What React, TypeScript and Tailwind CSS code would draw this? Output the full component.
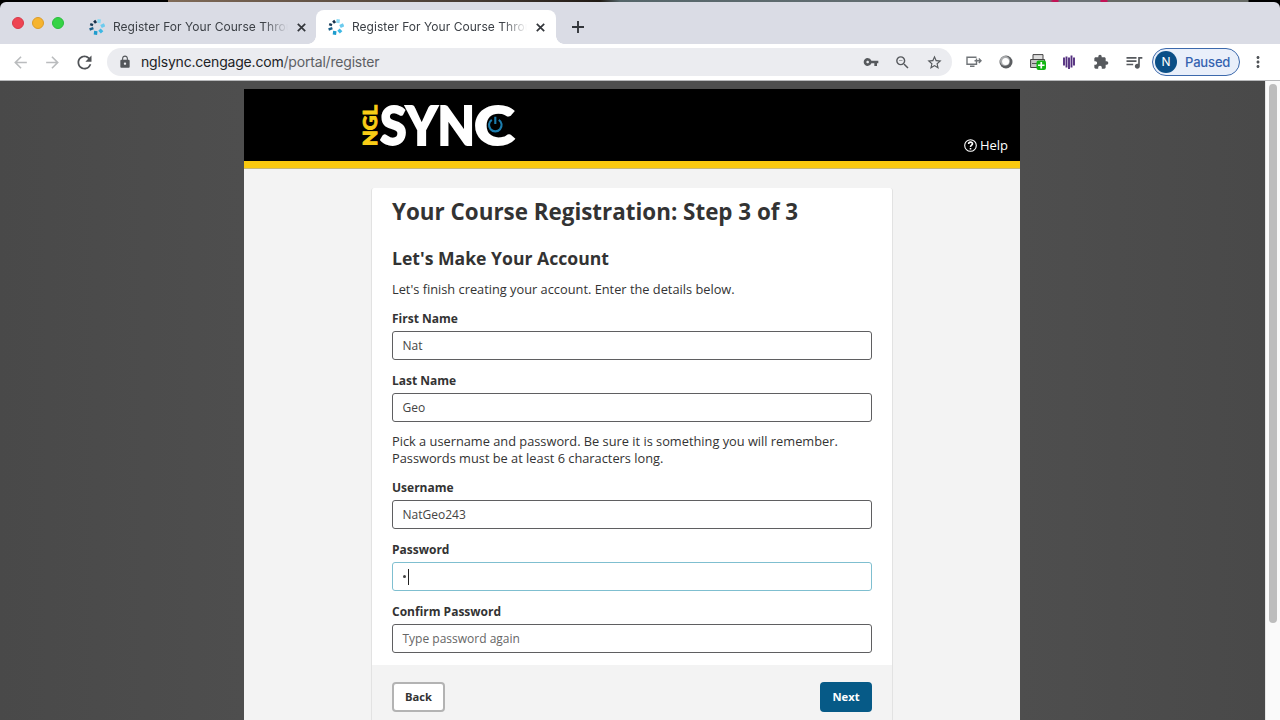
import React from 'react';
import { MdExtension, MdLock, MdOutlineStarBorder, MdQueueMusic, MdRefresh, MdVpnKey, MdOutlineZoomOut, MdArrowBack, MdArrowForward, MdMoreVert } from 'react-icons/md';

const Favicon = () => (
  <svg className="h-4 w-4 shrink-0" viewBox="0 0 16 16" fill="none" strokeWidth="3.4">
    <path d="M9.8 4l.5-3.700" stroke="#8bd8f2" />
    <path d="M12 7.600l3.600-1.800" stroke="#6ccbee" />
    <path d="M10.500 10.600l2.600 2.800" stroke="#3db8e4" />
    <path d="M6.800 12l-.4 3.800" stroke="#1e9ccd" />
    <path d="M4.400 9.200l-3.800 1.300" stroke="#17608a" strokeWidth="2.400" />
    <path d="M4 6.200L1.200 5.200" stroke="#173a56" strokeWidth="2.400" />
    <path d="M7 4L5.200 1.600" stroke="#16304a" strokeWidth="2.600" />
  </svg>
);

const CloseIcon = () => (
  <svg className="h-[9px] w-[9px] shrink-0" viewBox="0 0 9 9" stroke="#33363b" strokeWidth="1.7">
    <path d="M.8.8l7.4 7.4M8.2.8L.8 8.2" />
  </svg>
);

const TabContent = () => (
  <>
    <Favicon />
    <span className="ml-2 w-[175px] shrink-0 overflow-hidden whitespace-nowrap text-[12px] leading-4 tracking-[0.04px] text-[#3c4046] [mask-image:linear-gradient(to_right,black_86%,transparent)]">
      Register For Your Course Through
    </span>
    <span className="ml-[8.5px] flex">
      <CloseIcon />
    </span>
  </>
);

const TabBar = () => (
  <div className="flex h-[42px] shrink-0 items-end rounded-t-md bg-[#dadce5]">
    <div className="flex h-[42px] w-[316px] shrink-0 items-center pb-[1px]">
      <div className="ml-3 flex gap-2">
        <span className="h-3 w-3 rounded-full border border-[#d8394a] bg-[#ee4452]" />
        <span className="h-3 w-3 rounded-full border border-[#dc9c28] bg-[#f6b42f]" />
        <span className="h-3 w-3 rounded-full border border-[#29bd3c] bg-[#35d345]" />
      </div>
      <div className="ml-[25px] mt-[9px] flex items-center">
        <TabContent />
      </div>
    </div>
    <div className="relative flex h-[34px] w-[240px] shrink-0 items-center rounded-t-lg bg-white pb-[9px] pl-3 pt-[9px] before:absolute before:bottom-0 before:-left-2 before:h-2 before:w-2 before:bg-[radial-gradient(circle_at_0_0,#dadce5_7.5px,white_8px)] after:absolute after:bottom-0 after:-right-2 after:h-2 after:w-2 after:bg-[radial-gradient(circle_at_100%_0,#dadce5_7.5px,white_8px)]">
      <TabContent />
    </div>
    <svg className="mb-[11px] ml-4 h-3 w-3" viewBox="0 0 12 12" stroke="#33363b" strokeWidth="1.9">
      <path d="M6 0v12M0 6h12" />
    </svg>
  </div>
);

const CastIcon = () => (
  <svg className="h-4 w-4" viewBox="0 0 16 16" fill="none" stroke="#707478" strokeWidth="1.4">
    <path d="M10.5 3.200H1v7h9.500V9M4 12.300h4.500M8.500 6.800h6.200M12.800 4.600l2.200 2.200-2.200 2.200M10.500 4.500v4.500" />
  </svg>
);

const MoonIcon = () => (
  <svg className="h-[14px] w-[14px]" viewBox="0 0 14 14">
    <circle cx="7" cy="7" r="6.500" fill="#5c5e61" />
    <circle cx="6" cy="6" r="5" fill="#a9abad" />
    <circle cx="6.600" cy="6.400" r="3.500" fill="#fff" />
  </svg>
);

const PrinterIcon = () => (
  <svg className="h-4 w-4" viewBox="0 0 16 16">
    <path d="M3 .6h10v6H3z" fill="#ddd" stroke="#444" />
    <path d="M.6 5.500h14v8H.6z" fill="#c5c5c5" stroke="#444" />
    <path d="M2 9.500h6" stroke="#555" />
    <rect x="6.500" y="6.500" width="9.500" height="9.500" rx="2" fill="#12b612" />
    <path d="M11.250 8v6.500M8 11.250h6.500" stroke="#fff" strokeWidth="1.700" />
  </svg>
);

const BarsIcon = () => (
  <svg className="h-[14px] w-3" viewBox="0 0 12 14" stroke="#54307f" strokeWidth="1.900">
    <path d="M1 2.500v8M3.500 1.500v11M6 2.500v11.500M8.500 .5v12M11 2.500v8" />
  </svg>
);

const AddressBar = () => (
  <div className="flex h-9 shrink-0 items-center bg-white">
    <MdArrowBack className="ml-[11px] h-[19px] w-[19px] text-[#babcbe]" />
    <MdArrowForward className="ml-[13px] h-[19px] w-[19px] text-[#babcbe]" />
    <MdRefresh className="ml-3 h-[21px] w-[21px] text-[#505357]" />
    <div className="ml-3 flex h-7 w-[845px] items-center rounded-full bg-[#ebecf0] pl-[11px] pr-[9.5px]">
      <MdLock className="h-[14px] w-[14px] text-[#54575b]" />
      <div className="ml-[9px] pb-0.5 text-[14px] tracking-[-0.19px] text-[#5d6064]">
        <span className="text-[#202226]">nglsync.cengage.com</span>/portal/register
      </div>
      <div className="ml-auto flex items-center gap-[15px] text-[#56595d]">
        <MdVpnKey className="h-4 w-4" />
        <MdOutlineZoomOut className="h-[17px] w-[17px]" />
        <MdOutlineStarBorder className="h-[17px] w-[17px]" />
      </div>
    </div>
    <div className="ml-[14px] flex items-center gap-[17px] text-[#56595d]">
      <CastIcon />
      <MoonIcon />
      <PrinterIcon />
      <BarsIcon />
      <MdExtension className="ml-[1px] h-4 w-4" />
      <MdQueueMusic className="-ml-0.5 h-5 w-5" />
    </div>
    <div className="ml-2 flex h-7 w-[88px] shrink-0 items-center rounded-full border border-[#3c69ac] bg-[#e9effa] pl-[2px]">
      <span className="flex h-[22px] w-[22px] items-center justify-center rounded-full bg-[#0b4f87] text-[12px] text-white">N</span>
      <span className="ml-2 text-[13px] font-medium leading-4 tracking-[-0.15px] text-[#3563b0]">Paused</span>
    </div>
    <MdMoreVert className="ml-[9px] h-[18px] w-[18px] shrink-0 text-[#505357]" />
  </div>
);

const Logo = () => (
  <svg className="h-[50px] w-[160px]" viewBox="360 100 160 50">
    <text transform="translate(376.5 146) rotate(-90)" textLength="41" lengthAdjust="spacingAndGlyphs" fontFamily="Lato, sans-serif" fontWeight="900" fontSize="19" fill="#f9cd16" stroke="#f9cd16" strokeWidth="0.900">NGL</text>
    <g fontFamily="Lato, sans-serif" fontWeight="900" fontSize="54" fill="#fff" stroke="#fff" strokeWidth="1.800">
      <text x="380" y="144.500" textLength="95" lengthAdjust="spacingAndGlyphs">SYN</text>
      <text x="474" y="144.500" textLength="40.500" lengthAdjust="spacingAndGlyphs">C</text>
    </g>
    <path d="M491.800 119.800a6.300 6.300 0 1 0 7 0M495.300 116.800v7.200" fill="none" stroke="#1b7dae" strokeWidth="2.100" />
  </svg>
);

const SiteHeader = () => (
  <header className="flex h-20 justify-between border-b border-[#c7b878] bg-black">
    <div className="flex w-full justify-between border-b-[7px] border-[#f9c80e] pl-[116px] pr-3">
      <div className="pt-[11px]">
        <Logo />
      </div>
      <div className="mt-12 flex h-[18px] items-center gap-[3px] text-[13px] text-white">
        <svg className="mb-[2px] h-[13px] w-[13px]" viewBox="0 0 13 13" fill="none" stroke="white" strokeWidth="1.100">
          <circle cx="6.500" cy="6.500" r="5.800" />
          <path d="M4.600 5c.1-2.600 4-2.300 3.900-.1C8.400 6.300 6.500 6.200 6.500 8M6.500 9v1.400" strokeWidth="1.600" />
        </svg>
        Help
      </div>
    </div>
  </header>
);

interface FieldProps {
  label: string;
  value?: string;
  placeholder?: string;
  focused?: boolean;
}

const Field: React.FC<FieldProps> = ({ label, value, placeholder, focused }) => (
  <div className="mb-[11px]">
    <div className="mb-[3px] h-[19px] pt-px text-[12px] font-bold leading-[18px]">{label}</div>
    <div className={`flex h-[29px] items-center rounded-[3px] border px-[9.5px] text-[12px] ${focused ? 'border-[#7fbfd0]' : 'border-[#5f5f61]'}`}>
      {value && <span className="text-[#444]">{value}</span>}
      {placeholder && <span className="text-[#666]">{placeholder}</span>}
      {focused && (
        <>
          <span className="ml-[0.5px] h-[3px] w-[3px] rounded-full bg-[#444]" />
          <span className="ml-[1.5px] h-4 w-px bg-[#222]" />
        </>
      )}
    </div>
  </div>
);

const RegisterCard = () => (
  <div className="mx-auto mt-[19px] h-[600px] w-[522px] rounded-t-[3px] border-x border-[#e2e2e2] bg-white text-[#333]">
    <div className="h-[477px] px-5 pt-3">
      <h1 className="whitespace-nowrap text-[22.4px] font-bold leading-6">Your Course Registration: Step 3 of 3</h1>
      <h2 className="mt-[25px] text-[17.6px] font-bold leading-[18px]">Let's Make Your Account</h2>
      <p className="mb-[11px] mt-[14px] text-[12.8px] leading-[17px]">Let's finish creating your account. Enter the details below.</p>
      <Field label="First Name" value="Nat" />
      <Field label="Last Name" value="Geo" />
      <p className="mb-[11px] text-[12.8px] leading-[17px]">
        Pick a username and password. Be sure it is something you will remember. Passwords must be at least 6 characters long.
      </p>
      <Field label="Username" value="NatGeo243" />
      <Field label="Password" focused />
      <Field label="Confirm Password" placeholder="Type password again" />
    </div>
    <div className="flex h-[123px] items-start justify-between bg-[#f3f3f3] px-5 pt-[17px] text-[11.2px] font-bold">
      <button className="h-[30px] w-[53px] rounded-[4px] border-2 border-[#b3b3b3] bg-white">Back</button>
      <button className="h-[30px] w-[52px] rounded-[4px] bg-[#065a87] text-white">Next</button>
    </div>
  </div>
);

const App: React.FC = () => {
  return (
    <div className="flex h-[720px] w-[1280px] flex-col overflow-hidden bg-black font-['Inter',sans-serif]">
      <div className="h-[2px] shrink-0 bg-[linear-gradient(to_right,black_168px,#806b58_168px,#443932_480px,#201a14_600px,#55666a_620px,#6b7275_1050px,#c31357_1053px,#c31357_1058px,#6b7275_1059px,#6b7275_1100px,#c31357_1101px,#c31357_1107px,#666a65_1108px,#666a65_1248px,black_1249px)]" />
      <TabBar />
      <AddressBar />
      <div className="flex min-h-0 flex-1 border-t border-[#b8b9bb]">
        <main className="min-w-0 flex-1 overflow-hidden bg-[linear-gradient(to_right,#494949,#4e4e4e_244px,#4e4e4e_1020px,#494949)] pt-2 font-['Open_Sans',sans-serif]">
          <div className="ml-[244px] h-[700px] w-[776px] bg-[#f3f3f3]">
            <SiteHeader />
            <RegisterCard />
          </div>
        </main>
        <div className="w-[15px] border-l border-[#e6e6e6] bg-[#fafafa] pl-[3px] pt-[3px]">
          <div className="h-[539px] w-2 rounded-full bg-[#bdbdbd]" />
        </div>
      </div>
    </div>
  );
};

export default App;
